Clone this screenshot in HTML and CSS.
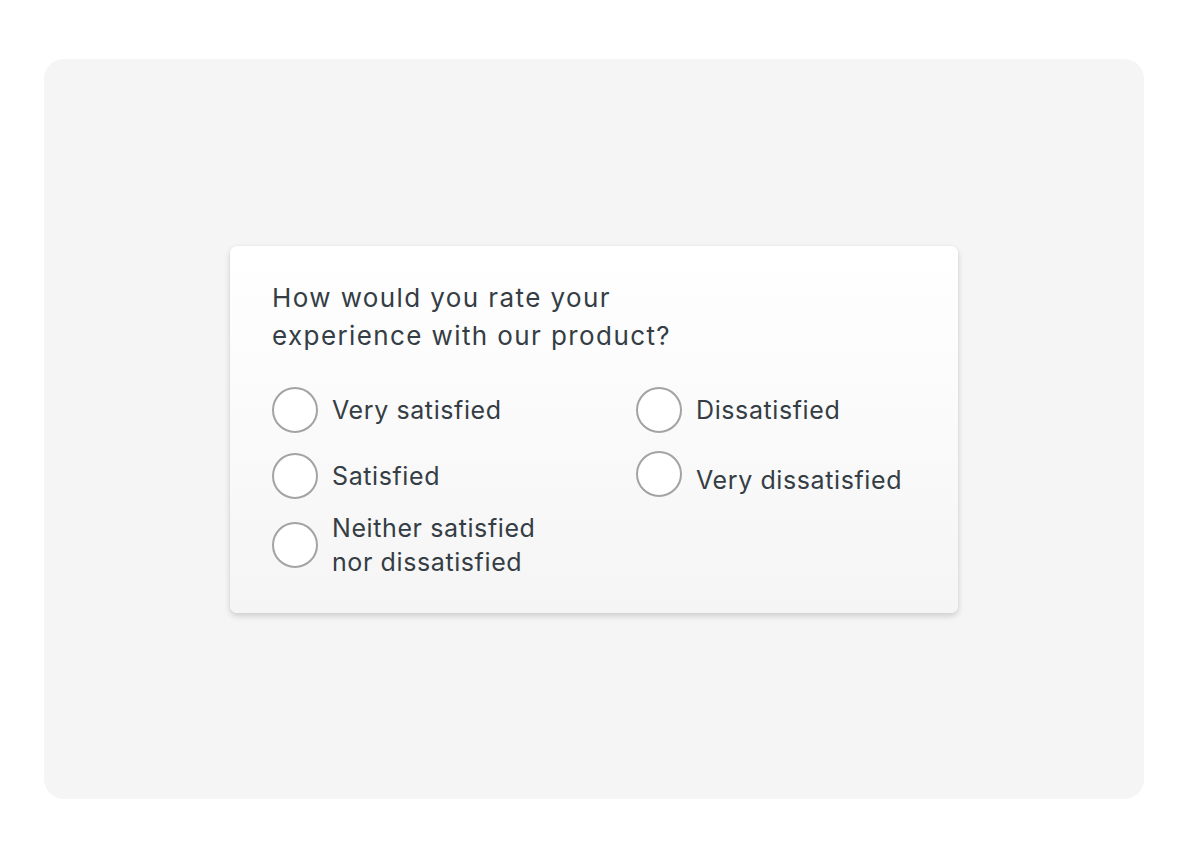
FILE: index.html
```html
<!DOCTYPE html>
<html lang="en">
<head>
<meta charset="utf-8">
<title>Survey question</title>
<link rel="stylesheet" href="styles.css">
</head>
<body>
<div class="stage">
  <div class="card">
    <p class="question">How would you rate your<br>experience with our product?</p>
    <div class="options">
      <div class="col">
        <label class="opt"><span class="radio"></span><span class="label">Very satisfied</span></label>
        <label class="opt"><span class="radio"></span><span class="label">Satisfied</span></label>
        <label class="opt opt-two"><span class="radio"></span><span class="label">Neither satisfied<br>nor dissatisfied</span></label>
      </div>
      <div class="col">
        <label class="opt"><span class="radio"></span><span class="label">Dissatisfied</span></label>
        <label class="opt opt-low"><span class="radio"></span><span class="label">Very dissatisfied</span></label>
      </div>
    </div>
  </div>
</div>
</body>
</html>
```
FILE: styles.css
```css
html, body {
  margin: 0;
  padding: 0;
  background: #ffffff;
}
body {
  width: 1192px;
  height: 856px;
  font-family: "Inter", "Liberation Sans", sans-serif;
  color: #353d45;
}
.stage {
  margin: 59px 48px 0 44px;
  height: 740px;
  background: #f5f5f5;
  border-radius: 20px;
  display: flex;
  align-items: flex-start;
  justify-content: flex-start;
}
.card {
  margin: 187px 0 0 186px;
  width: 728px;
  height: 367px;
  box-sizing: border-box;
  padding: 33px 42px 0 42px;
  border-radius: 7px;
  background: linear-gradient(180deg, #ffffff 0%, #f5f5f5 100%);
  box-shadow: 0 3px 6px rgba(0, 0, 0, 0.16), 0 0 2px rgba(0, 0, 0, 0.06);
}
.question {
  margin: 0;
  font-size: 26px;
  line-height: 38px;
  font-weight: 400;
  letter-spacing: 1.4px;
}
.options {
  display: grid;
  grid-template-columns: 364px 1fr;
  margin-top: 32px;
}
.col {
  display: flex;
  flex-direction: column;
}
.opt {
  display: flex;
  align-items: center;
  height: 46px;
  margin-bottom: 20px;
}
.opt-two {
  height: 68px;
  margin-top: -8px;
}
.opt-low {
  margin-top: -2px;
}
.opt-low .label {
  margin-top: 12px;
}
.radio {
  flex: none;
  width: 42px;
  height: 42px;
  border: 2px solid #a3a3a3;
  border-radius: 50%;
  background: #ffffff;
  margin-right: 14px;
}
.label {
  font-size: 25px;
  line-height: 34px;
  letter-spacing: 0.6px;
}
```
